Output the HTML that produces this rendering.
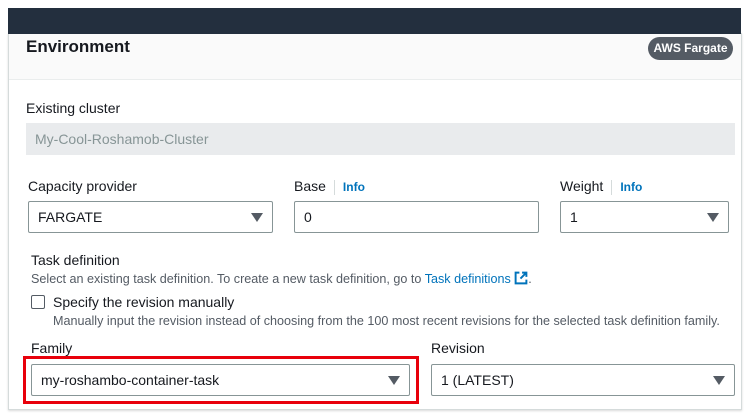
<!DOCTYPE html>
<html><head><style>
*{box-sizing:border-box;margin:0;padding:0}
body{width:750px;height:418px;background:#fff;font-family:"Liberation Sans",sans-serif;color:#16191f;position:relative;overflow:hidden}
.a{position:absolute;white-space:nowrap}
.bar{left:8px;top:8px;width:733px;height:26px;background:#232f3e}
.panel{left:8px;top:33px;width:734px;height:377px;border:1px solid #d5dbdb;border-top:none;box-shadow:0 1px 2px rgba(0,0,0,.15)}
.head{left:9px;top:33px;width:732px;height:47px;background:#fafafa;border-bottom:1px solid #eaeded}
.lbl{font-size:14px;color:#16191f}
.info{font-size:12px;font-weight:bold;color:#0073bb}
.sep{display:inline-block;width:1px;height:15px;background:#d5dbdb;vertical-align:middle;margin:0 8px}
.box{border:1px solid #879596;border-radius:2px;background:#fff;font-size:14px;padding:0 9px;display:flex;align-items:center;justify-content:space-between}
.tri{width:0;height:0;border-left:6px solid transparent;border-right:6px solid transparent;border-top:9px solid #545b64}
</style></head><body>
<div class="a panel"></div>
<div class="a head"></div>
<div class="a bar"></div>
<div class="a" style="left:26px;top:37px;font-size:17px;font-weight:bold">Environment</div>
<div class="a" style="left:648px;top:37px;width:85px;height:23px;border-radius:12px;background:#545b64;color:#fff;font-size:12px;font-weight:bold;text-align:center;line-height:23px">AWS Fargate</div>
<div class="a lbl" style="left:26px;top:100px">Existing cluster</div>
<div class="a" style="left:26px;top:123px;width:709px;height:32px;background:#e9ebed;color:#879596;font-size:14px;line-height:32px;padding-left:9px">My-Cool-Roshamob-Cluster</div>
<div class="a lbl" style="left:28px;top:178px">Capacity provider</div>
<div class="a lbl" style="left:294px;top:178px">Base<span class="sep"></span><span class="info">Info</span></div>
<div class="a lbl" style="left:560px;top:178px">Weight<span class="sep"></span><span class="info">Info</span></div>
<div class="a box" style="left:28px;top:201px;width:245px;height:32px">FARGATE<span class="tri"></span></div>
<div class="a box" style="left:294px;top:201px;width:245px;height:32px">0</div>
<div class="a box" style="left:560px;top:201px;width:169px;height:32px">1<span class="tri"></span></div>
<div class="a lbl" style="left:31px;top:252px">Task definition</div>
<div class="a" style="left:31px;top:271px;font-size:12.6px;color:#545b64">Select an existing task definition. To create a new task definition, go to <span style="color:#0073bb">Task definitions</span> <svg width="14" height="14" viewBox="0 0 13 13" style="vertical-align:-2px"><path d="M5 1.5H1.5v10h10V8M7.5 1.5h4v4M11.5 1.5L6 7" fill="none" stroke="#0073bb" stroke-width="1.8"/></svg>.</div>
<div class="a" style="left:31px;top:295px;width:14px;height:14px;border:1px solid #545b64;border-radius:2px"></div>
<div class="a lbl" style="left:53px;top:294px">Specify the revision manually</div>
<div class="a" style="left:53px;top:314px;font-size:12.6px;color:#545b64">Manually input the revision instead of choosing from the 100 most recent revisions for the selected task definition family.</div>
<div class="a lbl" style="left:31px;top:340px">Family</div>
<div class="a lbl" style="left:431px;top:340px">Revision</div>
<div class="a box" style="left:31px;top:364px;width:379px;height:32px">my-roshambo-container-task<span class="tri"></span></div>
<div class="a box" style="left:431px;top:364px;width:304px;height:32px">1 (LATEST)<span class="tri"></span></div>
<div class="a" style="left:23px;top:356px;width:396px;height:48px;border:3px solid #e8000b"></div>
</body></html>
